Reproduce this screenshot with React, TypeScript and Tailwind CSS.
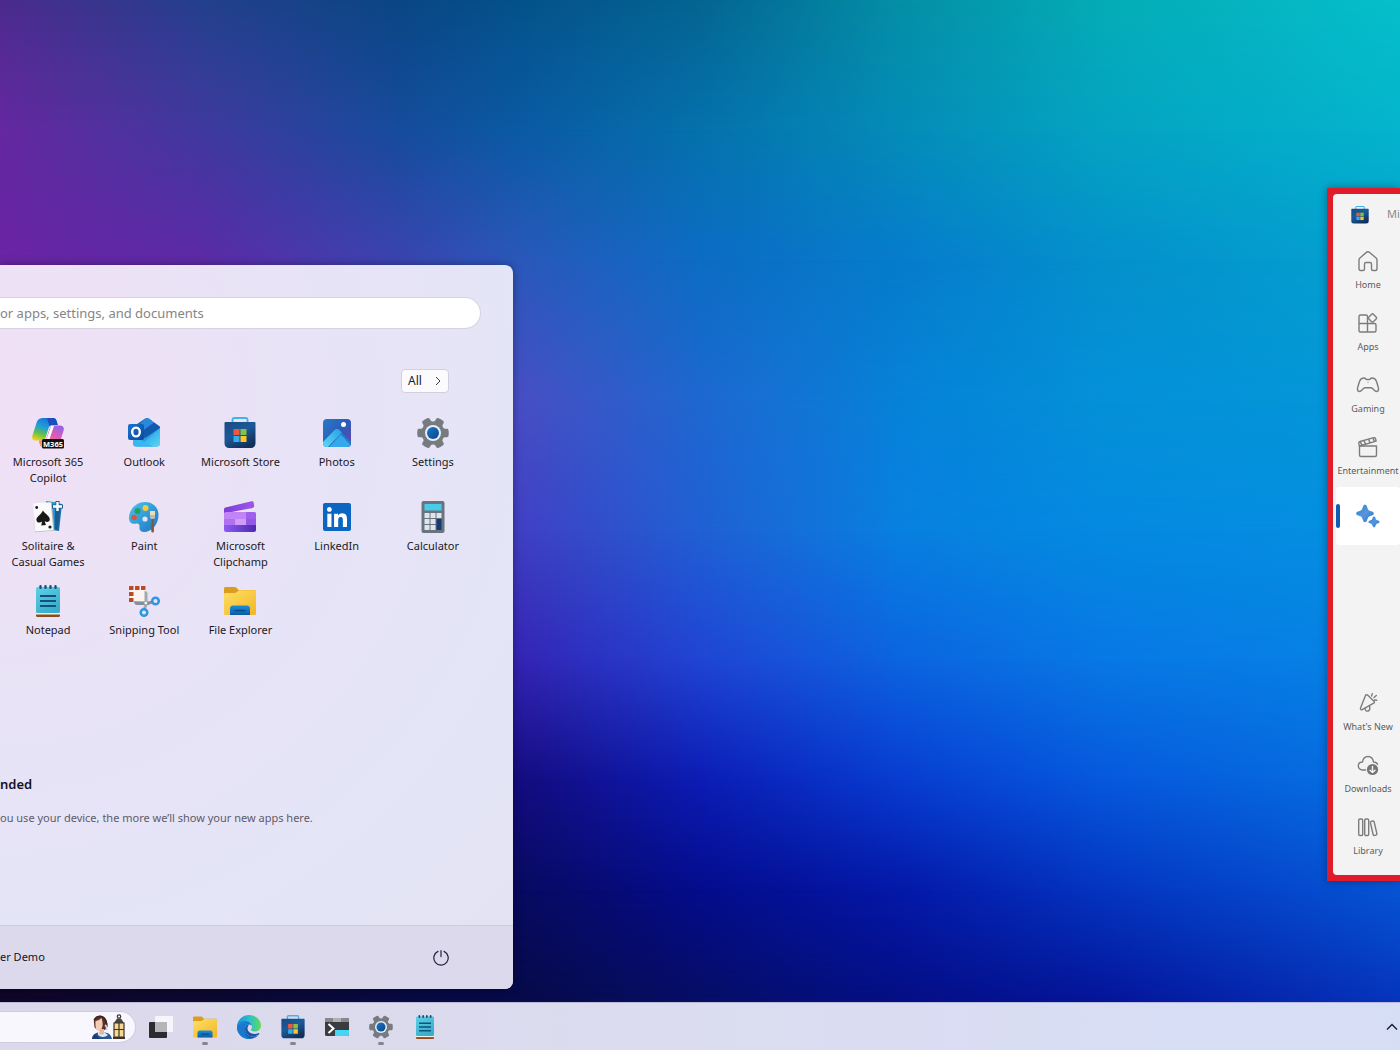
/**
 * Desktop with the Start menu open and the store window docked on the right.
 */

import type { ComponentType, ReactNode } from "react";
import { FaLinkedin } from "react-icons/fa";

type icon_props = {
  className?: string;
};

type app_entry = {
  name: string;
  icon: ComponentType<icon_props>;
};

/* ---------- wallpaper ---------- */

const WALLPAPER_COLUMNS = [0, 200, 400, 520, 700, 900, 1100, 1400];

const WALLPAPER_ROWS = [
  { y: 0, colors: ["#4c2b8c", "#24408c", "#0a4684", "#04528a", "#046592", "#048fa6", "#04acb6", "#06bfca"] },
  { y: 130, colors: ["#6528a0", "#41399f", "#164c9c", "#0a5aa4", "#0571ac", "#048cb8", "#04a3c2", "#04b4cd"] },
  { y: 260, colors: ["#6a24a4", "#5c2aa6", "#3a44b0", "#2a58ba", "#0c6cc4", "#067ccc", "#0490cc", "#04a2d0"] },
  { y: 400, colors: ["#6a24a4", "#5a30b0", "#4b44bc", "#484ec4", "#1e68d0", "#0682d8", "#0490d8", "#0498d8"] },
  { y: 530, colors: ["#50209a", "#4a28a8", "#4430b4", "#4040c4", "#2060d4", "#0880e0", "#048ae0", "#0490e0"] },
  { y: 660, colors: ["#301070", "#301484", "#341c9c", "#3424b4", "#2044d4", "#0c64e0", "#0878e4", "#0682e4"] },
  { y: 780, colors: ["#180848", "#180a50", "#180c64", "#140c80", "#0c1cb4", "#083cd0", "#0658dc", "#0670e0"] },
  { y: 890, colors: ["#10062c", "#0c0634", "#080648", "#080a60", "#040c8c", "#0418a8", "#0434c0", "#0654d4"] },
  { y: 1002, colors: ["#100628", "#0c0830", "#080a40", "#060a48", "#060e64", "#040e84", "#041498", "#0634bc"] },
];

function Wallpaper() {
  return (
    <svg
      className="absolute inset-0 h-full w-full"
      viewBox="0 0 1400 1002"
      preserveAspectRatio="none"
      aria-hidden="true"
    >
      <defs>
        {WALLPAPER_ROWS.map((row, index) => {
          const previous = WALLPAPER_ROWS[Math.max(0, index - 1)];

          return (
            <g key={row.y}>
              <linearGradient id={`wall-${index}`} gradientUnits="userSpaceOnUse" x1="0" y1="0" x2="1400" y2="0">
                {row.colors.map((color, column) => (
                  <stop key={column} offset={WALLPAPER_COLUMNS[column] / 1400} stopColor={color} />
                ))}
              </linearGradient>
              <linearGradient id={`fade-${index}`} gradientUnits="userSpaceOnUse" x1="0" y1={previous.y} x2="0" y2={row.y}>
                <stop offset="0" stopColor="#fff" stopOpacity="0" />
                <stop offset="1" stopColor="#fff" />
              </linearGradient>
              <mask id={`mask-${index}`} maskUnits="userSpaceOnUse" x="0" y="0" width="1400" height="1002" style={{ maskType: "alpha" }}>
                <rect width="1400" height="1002" fill={`url(#fade-${index})`} />
              </mask>
            </g>
          );
        })}
      </defs>
      {WALLPAPER_ROWS.map((row, index) => (
        <rect
          key={row.y}
          width="1400"
          height="1002"
          fill={`url(#wall-${index})`}
          mask={index > 0 ? `url(#mask-${index})` : undefined}
        />
      ))}
    </svg>
  );
}

/* ---------- app icons ---------- */

function CopilotIcon({ className }: icon_props) {
  return (
    <svg viewBox="0 0 32 32" className={className} aria-hidden="true">
      <defs>
        <linearGradient id="cp-left" x1="0.6" y1="0" x2="0.2" y2="1">
          <stop offset="0" stopColor="#1b6fd8" />
          <stop offset="0.4" stopColor="#1f9fd8" />
          <stop offset="0.7" stopColor="#62c04c" />
          <stop offset="1" stopColor="#f2d21c" />
        </linearGradient>
        <linearGradient id="cp-right" x1="0.7" y1="0" x2="0.2" y2="1">
          <stop offset="0" stopColor="#9b62e8" />
          <stop offset="0.45" stopColor="#e45ab0" />
          <stop offset="1" stopColor="#ff9a4c" />
        </linearGradient>
      </defs>
      <path d="M11 1h10c2 0 3 1 3.600 3l1.200 4h-5c-2.500 0-3.500 1-4.200 3l-3 9.500c-.7 2-2 3-4 3H4c-3 0-4.500-2-3.600-5L4.800 5C5.800 2.200 8 1 11 1z" fill="url(#cp-left)" />
      <path d="M15 1h6c2 0 3 1 3.600 3l1.200 4h-5c-1.500 0-2.600.4-3.300 1.300L15 1z" fill="#1b4fc0" />
      <path d="M21 8.500h7c3 0 4.500 2 3.600 5l-4 12.500c-.8 2.500-2.600 4-5.600 4H11c-2 0-3-1.200-3.400-3l-.8-3.500h4c2 0 3.300-1 4-3l3-9.500c.5-1.600 1.500-2.500 3.200-2.500z" fill="url(#cp-right)" />
      <path d="M19 9h3l-4.500 13c-.6 1.500-1.800 2-3.400 2H10c3 0 4.300-1 5-3z" fill="#fff" />
      <rect x="10" y="22" width="22" height="9.500" rx="1.500" fill="#101010" />
      <text x="21" y="29.500" textAnchor="middle" fill="#fff" fontSize="7.500" fontWeight="700" fontFamily="Noto Sans, sans-serif">
        M365
      </text>
    </svg>
  );
}

function OutlookIcon({ className }: icon_props) {
  return (
    <svg viewBox="0 0 32 32" className={className} aria-hidden="true">
      <defs>
        <linearGradient id="ol-body" x1="0" y1="0" x2="1" y2="1">
          <stop offset="0" stopColor="#1a8fe0" />
          <stop offset="1" stopColor="#5ad8f4" />
        </linearGradient>
        <linearGradient id="ol-badge" x1="0" y1="0" x2="1" y2="1">
          <stop offset="0" stopColor="#1a74d0" />
          <stop offset="1" stopColor="#0a4a9c" />
        </linearGradient>
      </defs>
      <path d="M5 10L17 1.800c1.200-.8 2.800-.8 4 0L31 9c.8.600 1 1 1 2v15.500c0 1.700-1.300 3-3 3H8c-1.700 0-3-1.300-3-3z" fill="#2a9be6" />
      <path d="M5 10L17 1.800c1.200-.8 2.800-.8 4 0L24 4 8 17l-3-2z" fill="#1468b8" />
      <path d="M17 1.800c1.200-.8 2.800-.8 4 0l5 3.600L12 16l-5-4z" fill="#2c88dc" />
      <path d="M26 5.400l5 3.600c.8.600 1 1 1 2L17 21l-7-4z" fill="#1258ac" />
      <path d="M32 11v15.500c0 1.700-1.300 3-3 3H11z" fill="url(#ol-body)" />
      <path d="M5 19l20 10.200c-.8.200-1.500.3-2.500.3H8c-1.700 0-3-1.300-3-3z" fill="#38b8ee" />
      <rect x="0" y="7" width="16" height="16" rx="2" fill="url(#ol-badge)" />
      <ellipse cx="8" cy="15" rx="3.800" ry="4.400" fill="none" stroke="#fff" strokeWidth="2.400" />
    </svg>
  );
}

function StoreIcon({ className }: icon_props) {
  return (
    <svg viewBox="0 0 32 32" className={className} aria-hidden="true">
      <defs>
        <linearGradient id="st-bag" x1="0" y1="0" x2="0.600" y2="1">
          <stop offset="0" stopColor="#1b4a82" />
          <stop offset="0.5" stopColor="#1c5a98" />
          <stop offset="1" stopColor="#12305c" />
        </linearGradient>
      </defs>
      <path d="M8.500 6V2.600C8.500 1.700 9.200 1 10.100 1h11.800c.9 0 1.600.7 1.600 1.600V6" fill="none" stroke="#3fb4ea" strokeWidth="1.800" />
      <path d="M1.500 5h29a1 1 0 0 1 1 1v20.500a4.500 4.500 0 0 1-4.500 4.500H5A4.500 4.500 0 0 1 .5 26.500V6a1 1 0 0 1 1-1z" fill="url(#st-bag)" />
      <rect x="9.500" y="12" width="6" height="6" fill="#f0583c" />
      <rect x="16.500" y="12" width="6" height="6" fill="#84c240" />
      <rect x="9.500" y="19" width="6" height="6" fill="#30aef0" />
      <rect x="16.500" y="19" width="6" height="6" fill="#fac62c" />
    </svg>
  );
}

function PhotosIcon({ className }: icon_props) {
  return (
    <svg viewBox="0 0 32 32" className={className} aria-hidden="true">
      <defs>
        <linearGradient id="ph-sky" x1="0" y1="0" x2="1" y2="0.8">
          <stop offset="0" stopColor="#2878c8" />
          <stop offset="0.6" stopColor="#2c5cb8" />
          <stop offset="1" stopColor="#6048b0" />
        </linearGradient>
        <linearGradient id="ph-hill" x1="1" y1="0" x2="0" y2="1">
          <stop offset="0" stopColor="#28a0e4" />
          <stop offset="1" stopColor="#5cdcf8" />
        </linearGradient>
        <clipPath id="ph-clip">
          <rect x="2" y="2" width="28" height="28" rx="4" />
        </clipPath>
      </defs>
      <g clipPath="url(#ph-clip)">
        <rect x="2" y="2" width="28" height="28" fill="url(#ph-sky)" />
        <path d="M13.800 12.800c1.300-1.200 3.100-1.200 4.400 0L31 26v5H14z" fill="#1c7cd0" />
        <path d="M1 26l12.800-13.200c1.300-1.200 3.100-1.200 4.400 0l2.600 2.700L6 31H1z" fill="url(#ph-hill)" />
        <path d="M20 17.500L32 31H7z" fill="#34a8ec" />
      </g>
      <circle cx="22.500" cy="7.500" r="2.500" fill="#fff" />
    </svg>
  );
}

function SettingsIcon({ className }: icon_props) {
  return (
    <svg viewBox="0 0 32 32" className={className} aria-hidden="true">
      <defs>
        <linearGradient id="se-dot" x1="0" y1="0" x2="1" y2="1">
          <stop offset="0" stopColor="#1a78cc" />
          <stop offset="1" stopColor="#0c4488" />
        </linearGradient>
      </defs>
      <g fill="#777b80">
        {[0, 60, 120, 180, 240, 300].map((angle) => (
          <path
            key={angle}
            transform={`rotate(${angle} 16 16)`}
            d="M24 9.500l2 1.500c.6.500 1.200.7 2 .7l2 .1c.8 0 1.300.4 1.500 1.200.4 2 .4 4 0 6-.2.8-.7 1.200-1.500 1.200l-2 .1c-.8 0-1.400.2-2 .7l-2 1.500z"
          />
        ))}
        <circle cx="16" cy="16" r="11.500" />
      </g>
      <circle cx="16" cy="16" r="8" fill="#e6f0fa" />
      <circle cx="16" cy="16" r="6" fill="url(#se-dot)" />
    </svg>
  );
}

function SolitaireIcon({ className }: icon_props) {
  return (
    <svg viewBox="0 0 32 32" className={className} aria-hidden="true">
      <path d="M17 1l13 2-3 27-13-2z" fill="#1c6ea8" />
      <path d="M14 0l12 1.500L23.500 29 12 28z" fill="#2c98d4" />
      <path d="M23 8l5 .5-2.500 20.500-3-.4z" fill="#185c90" />
      <path d="M1.800 2.500l18-1 2.600 28-19.400 1.700z" fill="#b4b8bc" />
      <path d="M1.200 2.200l17.600-.9 2.400 27.600-18 1.600z" fill="#fafafa" />
      <path d="M11 9.500c2.400 4 6.600 5.200 6.800 8.700.1 2.600-2.900 3.700-5.200 1.900l1.400 3.900-4.800.4.900-4c-2.200 2-5.500 1.200-5.700-1.500-.2-3.300 4.400-4.700 6.600-9.400z" fill="#181818" />
      <circle cx="4.700" cy="6.500" r="1.400" fill="#181818" />
      <circle cx="18" cy="26" r="1.600" fill="#181818" />
      <path d="M25.500 0v11M20 5.500h11" stroke="#1c5c90" strokeWidth="4" />
      <path d="M25.500 1v9M21 5.500h9" stroke="#fff" strokeWidth="2.400" />
    </svg>
  );
}

function PaintIcon({ className }: icon_props) {
  return (
    <svg viewBox="0 0 32 32" className={className} aria-hidden="true">
      <defs>
        <linearGradient id="pa-board" x1="0" y1="0" x2="1" y2="1">
          <stop offset="0" stopColor="#48c4ee" />
          <stop offset="1" stopColor="#1f74c4" />
        </linearGradient>
      </defs>
      <path d="M1 17C1 8.500 8 1 17 1c8 0 13.500 5.500 13.500 13 0 9-6.500 17-14.500 17-3.500 0-5-2-4.500-5 .3-2.500-.8-4-3.200-3.500C4 23.500 1 21.500 1 17z" fill="url(#pa-board)" />
      <circle cx="17" cy="18" r="2.600" fill="#e8e2f6" />
      <circle cx="9.500" cy="10" r="3" fill="#2e9c54" />
      <circle cx="17.500" cy="7" r="3" fill="#f2cc3c" />
      <circle cx="6" cy="16.500" r="2.800" fill="#d85a34" />
      <path d="M22 10h5v5.500c0 1.500-.8 2.500-2.500 2.500S22 17 22 15.500z" fill="#f0dcb0" />
      <path d="M22 14h5v1.500c0 1.500-.8 2.500-2.500 2.500S22 17 22 15.500z" fill="#b8bcc0" />
      <path d="M23.700 18h1.800l.5 12c0 .8-.6 1.500-1.400 1.500s-1.400-.7-1.400-1.500z" fill="#8a5630" />
    </svg>
  );
}

function ClipchampIcon({ className }: icon_props) {
  return (
    <svg viewBox="0 0 32 32" className={className} aria-hidden="true">
      <defs>
        <linearGradient id="cl-top" x1="0" y1="0" x2="1" y2="0">
          <stop offset="0" stopColor="#7c3cd8" />
          <stop offset="1" stopColor="#9c58ec" />
        </linearGradient>
        <linearGradient id="cl-low" x1="0" y1="0" x2="1" y2="0">
          <stop offset="0" stopColor="#8c5cf0" />
          <stop offset="1" stopColor="#4c28b0" />
        </linearGradient>
        <clipPath id="cl-clip">
          <rect x="0" y="11" width="32" height="20" rx="2" />
        </clipPath>
      </defs>
      <path d="M1.500 6.600L27.500.3c1.200-.3 2 .3 2.200 1.400l.5 3c.2 1.100-.4 1.900-1.500 2.200L0 12.500V9c0-1.400.4-2.100 1.500-2.400z" fill="url(#cl-top)" />
      <g clipPath="url(#cl-clip)">
        <rect x="0" y="11" width="32" height="7" fill="#c284f4" />
        <rect x="22" y="11" width="10" height="7" fill="#a060ec" />
        <rect x="0" y="18" width="11" height="7" fill="#b070f0" />
        <rect x="11" y="18" width="11" height="7" fill="#d09cf8" />
        <rect x="22" y="18" width="10" height="7" fill="#9458e8" />
        <rect x="0" y="24" width="32" height="7" fill="url(#cl-low)" />
      </g>
    </svg>
  );
}

function LinkedInIcon() {
  return (
    <FaLinkedin
      className="h-8 w-7 bg-[linear-gradient(white,white)] bg-[length:24px_24px] bg-center bg-no-repeat text-[#0a66c2]"
      aria-hidden="true"
    />
  );
}

function CalculatorIcon({ className }: icon_props) {
  return (
    <svg viewBox="0 0 32 32" className={className} aria-hidden="true">
      <rect x="4.500" y="0" width="23" height="32" rx="2" fill="#6a7480" />
      <rect x="7.500" y="3" width="17" height="6.500" rx="0.500" fill="#48cce8" />
      <g fill="#dfe5ea">
        <rect x="7.500" y="12" width="5" height="5" rx="0.500" />
        <rect x="13.500" y="12" width="5" height="5" rx="0.500" />
        <rect x="19.500" y="12" width="5" height="5" rx="0.500" />
        <rect x="7.500" y="18" width="5" height="5" rx="0.500" />
        <rect x="13.500" y="18" width="5" height="5" rx="0.500" />
        <rect x="7.500" y="24" width="5" height="5" rx="0.500" />
        <rect x="13.500" y="24" width="5" height="5" rx="0.500" />
      </g>
      <rect x="19.500" y="18" width="5" height="11" rx="0.500" fill="#143c74" />
    </svg>
  );
}

function NotepadIcon({ className }: icon_props) {
  return (
    <svg viewBox="0 0 32 32" className={className} aria-hidden="true">
      <defs>
        <linearGradient id="no-page" x1="0" y1="0" x2="0.500" y2="1">
          <stop offset="0" stopColor="#60d0e6" />
          <stop offset="1" stopColor="#38aecc" />
        </linearGradient>
      </defs>
      <path d="M4 28h24v2.500a1.500 1.500 0 0 1-1.500 1.500h-21A1.500 1.500 0 0 1 4 30.500z" fill="#8a4c20" />
      <path d="M4 27h24v2.500H4z" fill="#f6efe6" />
      <rect x="4" y="2" width="24" height="26" rx="1.500" fill="url(#no-page)" />
      <g stroke="#12527a" strokeWidth="2">
        <path d="M8 11h16M8 16h16M8 21h16" />
        <path d="M8.500 1.200v1.600M13.500 1.200v1.600M18.500 1.200v1.600M23.500 1.200v1.600" strokeWidth="2.400" strokeLinecap="round" />
      </g>
    </svg>
  );
}

function SnippingIcon({ className }: icon_props) {
  return (
    <svg viewBox="0 0 32 32" className={className} aria-hidden="true">
      <rect x="2" y="2" width="16" height="15" fill="#fbf4f0" />
      <g fill="#b84a24">
        <rect x="1" y="1" width="4.500" height="4" rx="0.600" />
        <rect x="7" y="1" width="4.500" height="4" rx="0.600" />
        <rect x="13" y="1" width="4.500" height="4" rx="0.600" />
        <rect x="1" y="7" width="4.500" height="4" rx="0.600" />
        <rect x="1" y="13" width="4.500" height="4" rx="0.600" />
      </g>
      <path d="M16.500 6c1.500-.2 3 .8 3 2.500V20l-2 5-2.500-1.500 1.500-4z" fill="#a2aab0" />
      <path d="M6 16.300C6 18.500 7.200 20 9 20h11l5.500-2-1.500-2.500-3.500 1z" fill="#868e96" />
      <circle cx="17.800" cy="18" r="1.500" fill="#f0f4f8" />
      <circle cx="27.500" cy="16" r="3.300" fill="none" stroke="#2f96e0" strokeWidth="2.500" />
      <circle cx="16" cy="27.500" r="3.300" fill="none" stroke="#2f96e0" strokeWidth="2.500" />
    </svg>
  );
}

function ExplorerIcon({ className }: icon_props) {
  return (
    <svg viewBox="0 0 32 32" className={className} aria-hidden="true">
      <defs>
        <linearGradient id="ex-front" x1="0" y1="0" x2="0.800" y2="1">
          <stop offset="0" stopColor="#fde066" />
          <stop offset="1" stopColor="#f4b828" />
        </linearGradient>
        <linearGradient id="ex-tray" x1="0" y1="0" x2="0" y2="1">
          <stop offset="0" stopColor="#1a90d8" />
          <stop offset="1" stopColor="#0c5ca8" />
        </linearGradient>
      </defs>
      <path d="M0 3.500C0 2.700.7 2 1.500 2h9c.8 0 1.500.3 2 .8L14.500 5H30c1.100 0 2 .9 2 2v6H0z" fill="#dc9c20" />
      <path d="M0 9.500c0-.8.700-1.500 1.500-1.500h9c.8 0 1.400-.2 2-.7L15 5.300h15.500c.8 0 1.500.7 1.500 1.500V29a1 1 0 0 1-1 1H1.500A1.500 1.500 0 0 1 0 28.500z" fill="url(#ex-front)" />
      <path d="M6 30v-6.500c0-1.700 1.300-3 3-3h14c1.700 0 3 1.300 3 3V30z" fill="url(#ex-tray)" />
      <path d="M11 25.500h10" stroke="#0c4c88" strokeWidth="1.400" strokeLinecap="round" />
    </svg>
  );
}

function TaskViewIcon({ className }: icon_props) {
  return (
    <svg viewBox="0 0 24 24" className={className} aria-hidden="true">
      <rect x="6" y="1" width="18" height="16" rx="1" fill="#f6f6fa" />
      <rect x="0" y="7" width="18" height="16" rx="1" fill="#2c2c30" />
      <path d="M6 7h12v10H6z" fill="#b4b4ba" />
    </svg>
  );
}

function EdgeIcon({ className }: icon_props) {
  return (
    <svg viewBox="0 0 24 24" className={className} aria-hidden="true">
      <defs>
        <linearGradient id="ed-top" x1="0" y1="0.500" x2="1" y2="0.500">
          <stop offset="0" stopColor="#1c90d8" />
          <stop offset="0.500" stopColor="#2cbcd0" />
          <stop offset="1" stopColor="#62dc58" />
        </linearGradient>
        <linearGradient id="ed-low" x1="0" y1="0" x2="1" y2="1">
          <stop offset="0" stopColor="#1b8ce0" />
          <stop offset="1" stopColor="#124c9c" />
        </linearGradient>
      </defs>
      <path d="M0 11C.6 5 5.600 0 12 0c7 0 12 5 12 10.500 0 3.700-2.800 6-6 6-2.500 0-4-.8-4-1.700 0-.7 1-1.300 1-3.200C15 9 12.500 7 9 7 4.500 7 1 9 0 12.500z" fill="url(#ed-top)" />
      <path d="M0 12C.3 8.500 3.500 6 7.500 6c4.200 0 7 2.300 7.400 5-.7-1-1.800-1.500-3.100-1.500-2 0-3.800 1.600-3.800 4.500 0 4 3.200 7.500 7.500 7.500 2.500 0 4.700-.8 6.400-2C19.800 22.300 16 24 12 24 5.400 24 0 18.600 0 12z" fill="url(#ed-low)" />
      <path d="M8 14c0 4 3.200 7.500 7.500 7.500 2.700 0 5-1 6.500-2.200.7-.7 0-1.500-.8-1.100-1 .5-2.100.8-3.400.8-4.300 0-7.300-2.600-7.300-5.700 0-1.600.8-3 1.900-3.800C10 9.300 8 11 8 14z" fill="#1458a8" />
      <path d="M0 12c0 6.600 5.400 12 12 12 1 0 2-.1 2.900-.4C9.600 23 7 19.500 7 15c0-2.500 1-4.500 3-5.400C5 8.500 1 10 0 12z" fill="#1a78d0" />
    </svg>
  );
}

function TerminalIcon({ className }: icon_props) {
  return (
    <svg viewBox="0 0 24 24" className={className} aria-hidden="true">
      <rect x="0" y="3" width="24" height="18" rx="1.500" fill="#3a3c40" />
      <path d="M1.500 3h21A1.500 1.500 0 0 1 24 4.500V7H0V4.500A1.500 1.500 0 0 1 1.500 3z" fill="#86888c" />
      <path d="M8 3h8v4H8z" fill="#aeb0b4" />
      <path d="M10 15h14v4.500a1.500 1.500 0 0 1-1.500 1.500H10z" fill="#44d4f4" />
      <path d="M3.500 9l5 4.500-5 4.500" fill="none" stroke="#fff" strokeWidth="2" />
    </svg>
  );
}

function NurseAndLamp() {
  return (
    <svg viewBox="0 0 36 26" className="h-[26px] w-9 shrink-0" aria-hidden="true">
      <path d="M1 25c0-4 3-6 6-6.500h6c4 0 7 2 8 6.500z" fill="#2a5494" />
      <path d="M7 18h6l4 3c-3 2.500-7 2.500-10 0z" fill="#d8ecfa" />
      <path d="M11 2C5.500 1 2 4.500 3 9c.3 2 0 3 1 5 3 2.500 8 3.500 11 1 2-4 2-11-4-13z" fill="#5a3028" />
      <path d="M4.500 7c3-.5 5-2 6-3 .8 3 1.500 5 1 8-.5 3-2 5-4 5S4 14 4.500 7z" fill="#f4cdb4" />
      <path d="M9 15h4v5c-2 1-3 1-5 0z" fill="#e8b49c" />
      <path d="M3 6c2-4 7-5 10-2 2 2 3 6 3 9" fill="none" stroke="#3c2420" strokeWidth="1.400" />
      <path d="M14 11c1.500 1 2 3 1.500 5" fill="none" stroke="#d8d0e8" strokeWidth="1.600" />
      <path d="M1 25l3-5 3 3 3 2z" fill="#1c3c70" />
      <circle cx="28" cy="2.500" r="1.700" fill="none" stroke="#3a3838" strokeWidth="1.200" />
      <path d="M23 9l3-4.500h4L33 9z" fill="#4a4438" />
      <rect x="23" y="9" width="10" height="14" fill="#f8d890" />
      <path d="M23 9h10v14H23zM28 9v14M23 15.500h10" fill="none" stroke="#3a342c" strokeWidth="1.200" />
      <path d="M22 23h12v2H22z" fill="#3a342c" />
    </svg>
  );
}

/* ---------- rail icons ---------- */

function Outline({ children }: { children: ReactNode }) {
  return (
    <svg
      viewBox="0 0 24 24"
      className="h-6 w-6"
      fill="none"
      stroke="#7c7c7c"
      strokeWidth="1.400"
      strokeLinecap="round"
      strokeLinejoin="round"
      aria-hidden="true"
    >
      {children}
    </svg>
  );
}

function HomeGlyph() {
  return (
    <Outline>
      <path d="M3 11c0-.8.300-1.500.900-2l6.500-5.600c.9-.8 2.300-.8 3.200 0L20.100 9c.6.500.9 1.200.9 2v9c0 .8-.7 1.500-1.500 1.500H17c-.8 0-1.500-.7-1.500-1.500v-5c0-.8-.7-1.500-1.500-1.500h-4c-.8 0-1.500.7-1.500 1.500v5c0 .8-.7 1.500-1.500 1.500H4.500c-.8 0-1.500-.7-1.500-1.500z" />
    </Outline>
  );
}

function AppsGlyph() {
  return (
    <Outline>
      <path d="M11.500 12.500H3v-7C3 4.700 3.700 4 4.500 4h5.500c.8 0 1.500.7 1.500 1.500zV21M3 12.500v7c0 .8.700 1.500 1.500 1.500H18.500c.8 0 1.500-.7 1.500-1.500V14c0-.8-.7-1.500-1.500-1.500h-7" />
      <rect x="13.200" y="3.700" width="6.600" height="6.600" rx="1.200" transform="rotate(45 16.500 7)" />
    </Outline>
  );
}

function GamingGlyph() {
  return (
    <Outline>
      <path d="M5.800 5.500c1.800-.8 3.200-.6 4 .5.300.4.600.5 1 .5h2.400c.4 0 .7-.1 1-.5.800-1.100 2.200-1.300 4-.5 1.200.5 1.800 1.500 2.300 3l1.700 5.500c.6 2.200.3 4-1.100 4.400-1.200.3-2-.2-3-1.400l-1.600-1.600c-.5-.5-1-.7-1.700-.7H9.200c-.7 0-1.200.2-1.700.7L5.900 17c-1 1.200-1.800 1.700-3 1.400-1.400-.4-1.700-2.200-1.100-4.400l1.700-5.500c.5-1.500 1.100-2.500 2.300-3z" />
      <path d="M12 9.200v0.100" strokeWidth="1" />
    </Outline>
  );
}

function EntertainmentGlyph() {
  return (
    <Outline>
      <path d="M3.500 11h17v9c0 .8-.7 1.500-1.500 1.500H5c-.8 0-1.500-.7-1.500-1.500z" />
      <path d="M3.500 11L2.800 8.400c-.2-.9.300-1.700 1.200-1.900L17.800 2.700c.8-.2 1.600.3 1.800 1.100l.5 2.300L3.500 11M8 5.600l1.500 3.400M12.500 4.300L14 7.600M17 3l1.300 3.400M4.500 7.500L6 9.800" />
    </Outline>
  );
}

function SparkleGlyph() {
  return (
    <svg viewBox="0 0 24 24" className="h-6 w-6" aria-hidden="true">
      <defs>
        <linearGradient id="sparkle-fill" x1="0" y1="0" x2="1" y2="1">
          <stop offset="0" stopColor="#1c84d4" />
          <stop offset="0.500" stopColor="#5c94dc" />
          <stop offset="1" stopColor="#1c78cc" />
        </linearGradient>
      </defs>
      <path d="M9 0.800c.8 0 1.400.5 1.700 1.200l1.200 3c.3.800.9 1.400 1.700 1.700l3 1.100c1.600.6 1.600 2.800 0 3.400l-3 1.100c-.8.300-1.400.9-1.700 1.700l-1.200 3c-.6 1.600-2.800 1.600-3.400 0l-1.200-3c-.3-.8-.9-1.400-1.700-1.700l-3-1.100c-1.600-.6-1.600-2.800 0-3.400l3-1.100c.8-.3 1.400-.9 1.700-1.700l1.200-3c.3-.7.9-1.200 1.700-1.200z" fill="url(#sparkle-fill)" />
      <path d="M18 12.400c.6 0 1 .3 1.200.8l.6 1.700c.2.500.6.900 1.100 1.100l1.800.7c1.100.4 1.100 2 0 2.400l-1.800.7c-.5.200-.9.600-1.100 1.100l-.6 1.700c-.4 1.100-2 1.100-2.400 0l-.6-1.700c-.2-.5-.6-.9-1.100-1.100l-1.800-.7c-1.100-.4-1.100-2 0-2.400l1.800-.7c.5-.2.900-.6 1.100-1.100l.6-1.700c.2-.5.600-.8 1.200-.8z" fill="url(#sparkle-fill)" />
    </svg>
  );
}

function WhatsNewGlyph() {
  return (
    <Outline>
      <path d="M9.500 4.500c.4-.8 1.300-1 2-.4l6.500 6.200c.6.600.5 1.500-.3 1.900L6.200 18.700c-.4.200-.9.100-1.200-.2l-.3-.3c-.3-.3-.4-.8-.2-1.200z" />
      <path d="M9 17.500c.3 2 1.600 3 3.200 2.500 1.400-.4 2-1.800 1.400-4.800M15.500 5l.8-2.300M18 6.500l2.300-2M18.500 9l2.200.3" />
    </Outline>
  );
}

function DownloadsGlyph() {
  return (
    <Outline>
      <path d="M9.500 17H6.500C4 17 2.300 15.200 2.300 13c0-2.300 1.800-4 4.200-4C7 5.800 9 3.500 12 3.500S17 5.800 17.500 9c1.800 0 3.300.8 4 2.300" />
      <circle cx="16.500" cy="16.500" r="5.600" fill="#757575" stroke="none" />
      <path d="M16.500 13.500v6M14 17.200l2.500 2.400 2.500-2.400" stroke="#f3f3f3" />
    </Outline>
  );
}

function LibraryGlyph() {
  return (
    <Outline>
      <rect x="2.700" y="4" width="4" height="16.500" rx="1.200" />
      <rect x="8.700" y="4" width="4" height="16.500" rx="1.200" />
      <rect x="15.700" y="6" width="3.800" height="14.500" rx="1.200" transform="rotate(-13 17.500 13)" />
    </Outline>
  );
}

/* ---------- data ---------- */

const PINNED_APPS: app_entry[] = [
  { name: "Microsoft 365 Copilot", icon: CopilotIcon },
  { name: "Outlook", icon: OutlookIcon },
  { name: "Microsoft Store", icon: StoreIcon },
  { name: "Photos", icon: PhotosIcon },
  { name: "Settings", icon: SettingsIcon },
  { name: "Solitaire & Casual Games", icon: SolitaireIcon },
  { name: "Paint", icon: PaintIcon },
  { name: "Microsoft Clipchamp", icon: ClipchampIcon },
  { name: "LinkedIn", icon: LinkedInIcon },
  { name: "Calculator", icon: CalculatorIcon },
  { name: "Notepad", icon: NotepadIcon },
  { name: "Snipping Tool", icon: SnippingIcon },
  { name: "File Explorer", icon: ExplorerIcon },
];

const TASKBAR_APPS = [
  { name: "Task view", icon: TaskViewIcon, running: false },
  { name: "File Explorer", icon: ExplorerIcon, running: true },
  { name: "Edge", icon: EdgeIcon, running: false },
  { name: "Microsoft Store", icon: StoreIcon, running: true },
  { name: "Terminal", icon: TerminalIcon, running: false },
  { name: "Settings", icon: SettingsIcon, running: true },
  { name: "Notepad", icon: NotepadIcon, running: false },
];

const RAIL_TOP = [
  { name: "Home", icon: HomeGlyph },
  { name: "Apps", icon: AppsGlyph },
  { name: "Gaming", icon: GamingGlyph },
  { name: "Entertainment", icon: EntertainmentGlyph },
];

const RAIL_BOTTOM = [
  { name: "What's New", icon: WhatsNewGlyph },
  { name: "Downloads", icon: DownloadsGlyph },
  { name: "Library", icon: LibraryGlyph },
];

/* ---------- panels ---------- */

function StartMenu() {
  return (
    <section
      aria-label="Start"
      className="mb-[13px] flex w-[513px] flex-col self-end overflow-hidden rounded-r-lg bg-[radial-gradient(circle_at_0%_20%,#f1e0f5_0%,#e9e3f6_35%,#e4e5f7_70%,#e3e2f1_100%)] shadow-[0_0_8px_rgba(0,0,0,0.35)]"
    >
      <div className="pt-8 pr-8">
        <input
          type="search"
          aria-label="Search"
          placeholder="or apps, settings, and documents"
          className="block h-8 w-full rounded-r-full border border-l-0 border-[#d6d2e2] bg-white text-[13px] outline-none placeholder:text-[#858585]"
        />
      </div>

      <div className="mt-10 mr-16 flex justify-end">
        <button
          type="button"
          className="flex h-6 w-12 items-center justify-between rounded border border-[#d2d0dc] bg-[#fbfbfe] px-1.5 text-xs text-[#1c1c24]"
        >
          All
          <svg viewBox="0 0 8 10" className="h-2.5 w-2" fill="none" stroke="#3c3c44" aria-hidden="true">
            <path d="M2 1l4 4-4 4" />
          </svg>
        </button>
      </div>

      <div className="mt-4 mr-8 grid grid-cols-5">
        {PINNED_APPS.map(({ name, icon: Icon }) => (
          <button key={name} type="button" className="flex h-[84px] flex-col items-center px-1 pt-2">
            <Icon className="h-8 w-8" />
            <span className="mt-[5px] text-center text-[11px] leading-4 text-[#1a1824]">{name}</span>
          </button>
        ))}
      </div>

      <div className="mt-[113px] h-[151px]">
        <h2 className="text-[13px] leading-5 font-semibold text-[#15131f]">nded</h2>
        <p className="mt-4 text-[11px] leading-4 text-[#5e5b6a]">
          ou use your device, the more we’ll show your new apps here.
        </p>
      </div>

      <footer className="flex h-16 items-center justify-between border-t border-[#cccbdb] bg-[#dbd9eb] pr-16">
        <button type="button" className="text-[11px] text-[#15131f]">
          er Demo
        </button>
        <button type="button" aria-label="Power">
          <svg viewBox="0 0 16 16" className="h-4 w-4" fill="none" stroke="#24223a" strokeWidth="1.200" strokeLinecap="round" aria-hidden="true">
            <path d="M5 1.400a7.200 7.200 0 1 0 6 0M8 0.600v6" />
          </svg>
        </button>
      </footer>
    </section>
  );
}

function RailButton({ name, children }: { name: string; children: ReactNode }) {
  return (
    <button type="button" className="flex h-[58px] flex-col items-center pt-2.5 text-[9px] leading-[14px] text-[#5c5c5c]">
      {children}
      <span className="mt-[5px] whitespace-nowrap">{name}</span>
    </button>
  );
}

function StoreWindow() {
  return (
    <section
      aria-label="Microsoft Store"
      className="mt-[188px] mb-[121px] w-[73px] bg-[#e11c2a] py-1.5 pl-1.5 shadow-[0_0_8px_rgba(0,0,0,0.35)]"
    >
      <div className="flex h-full flex-col overflow-hidden rounded-l bg-[#f3f3f3] pb-3">
        <header className="flex h-[45px] shrink-0 items-center gap-[18px] pb-1 pl-[18px] text-[11px] text-[#8a8a8a]">
          <StoreIcon className="h-[18px] w-[18px] shrink-0" />
          <span>Mi</span>
        </header>
        <nav className="ml-[3px] flex flex-1 flex-col gap-1">
          {RAIL_TOP.map(({ name, icon: Icon }) => (
            <RailButton key={name} name={name}>
              <Icon />
            </RailButton>
          ))}
          <button
            type="button"
            aria-label="AI Hub"
            className="flex h-[58px] items-center rounded bg-white"
          >
            <span className="h-6 w-1 rounded-full bg-[#0f5cb0]" />
            <span className="flex flex-1 justify-center pr-1">
              <SparkleGlyph />
            </span>
          </button>
          <div className="mt-auto flex flex-col gap-1">
            {RAIL_BOTTOM.map(({ name, icon: Icon }) => (
              <RailButton key={name} name={name}>
                <Icon />
              </RailButton>
            ))}
          </div>
        </nav>
      </div>
    </section>
  );
}

function Taskbar() {
  return (
    <footer className="flex h-12 shrink-0 items-center border-t border-[#b9bad6] bg-linear-to-r from-[#dcd8ea] via-[#dbdcf0] to-[#d6def6]">
      <label className="flex h-8 w-[136px] items-center rounded-r-full border border-l-0 border-[#cfcce0] bg-[#f8f7fd] pr-2">
        <input type="search" aria-label="Search" className="min-w-0 flex-1 bg-transparent text-xs outline-none" />
        <NurseAndLamp />
      </label>
      <div className="ml-[3px] flex">
        {TASKBAR_APPS.map(({ name, icon: Icon, running }) => (
          <button key={name} type="button" aria-label={name} className="relative flex h-12 w-11 items-center justify-center">
            <Icon className="h-6 w-6" />
            {running && <span className="absolute bottom-1.5 h-[3px] w-1.5 rounded-full bg-[#85848f]" />}
          </button>
        ))}
      </div>
      <button type="button" aria-label="Show hidden icons" className="mr-0.5 ml-auto">
        <svg viewBox="0 0 12 12" className="h-3 w-3" fill="none" stroke="#20202c" strokeWidth="1.500" aria-hidden="true">
          <path d="M1 8.500l5-5 5 5" />
        </svg>
      </button>
    </footer>
  );
}

export default function App() {
  return (
    <div className="flex h-screen flex-col overflow-hidden font-['Noto_Sans',sans-serif]">
      <main className="relative min-h-0 flex-1">
        <Wallpaper />
        <div className="relative flex h-full justify-between">
          <StartMenu />
          <StoreWindow />
        </div>
      </main>
      <Taskbar />
    </div>
  );
}
